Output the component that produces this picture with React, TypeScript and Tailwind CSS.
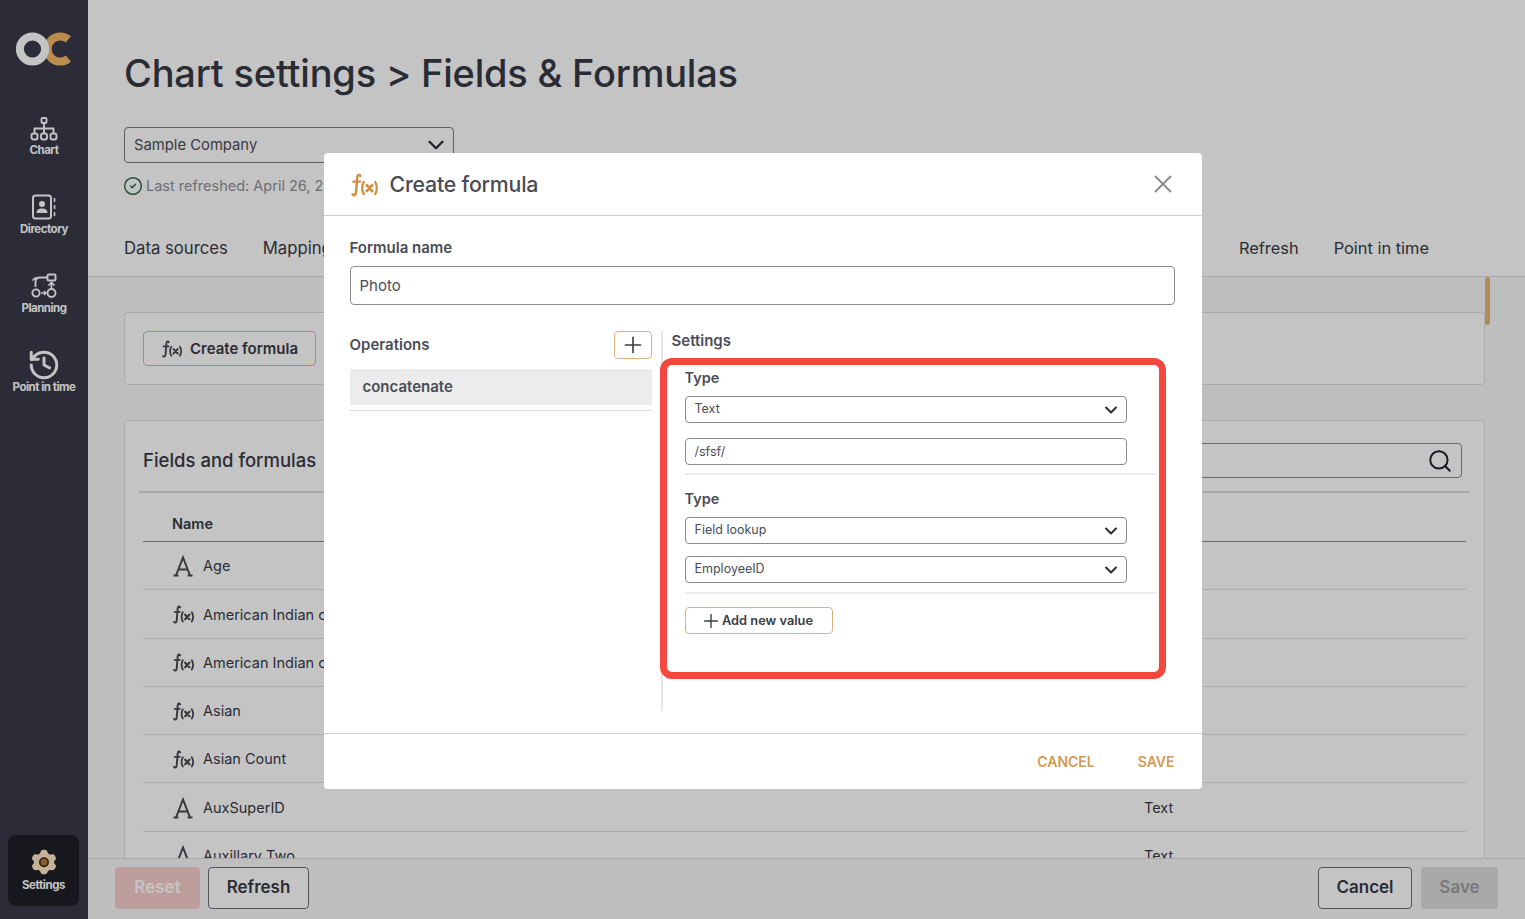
import React from "react";
import { ChevronDown, Plus, X, Search, History, CircleCheck } from "lucide-react";

const Fx = ({ className = "" }: { className?: string }) => (
  <svg viewBox="0 0 28 24" fill="none" stroke="currentColor" className={className}>
    <path d="M10.4 3C9.5 1.2 7.6 1.5 7.3 4L6 19.5C5.7 22 4.2 22.8 2.6 21.5" strokeWidth="2.5" strokeLinecap="round" />
    <path d="M3.4 8.6H10" strokeWidth="2.4" strokeLinecap="round" />
    <path d="M13.8 9C11.6 12.2 11.6 17.8 13.8 21M25.2 9C27.4 12.2 27.4 17.8 25.2 21" strokeWidth="2.3" strokeLinecap="round" />
    <path d="M16.8 12.2L22.2 18M22.2 12.2L16.8 18" strokeWidth="2.8" strokeLinecap="round" />
  </svg>
);

const AIcon = () => (
  <svg viewBox="0 0 20 22" fill="none" stroke="#4a4b52" strokeWidth="2" className="w-[20px] h-[22px] shrink-0">
    <path d="M3 20.5L10 2.5L17 20.5M5.2 14.5H14.8" />
    <path d="M0.5 20.6H5.4M14.6 20.6H19.5" />
  </svg>
);

const ChartIcon = () => (
  <svg viewBox="0 0 28 24" fill="none" stroke="currentColor" strokeWidth="1.9" className="w-[28px] h-[24px]">
    <rect x="11.5" y="1" width="5" height="5" rx="1" />
    <rect x="1.5" y="16.5" width="6" height="6" rx="2" />
    <rect x="11" y="16.5" width="6" height="6" rx="2" />
    <rect x="20.5" y="16.5" width="6" height="6" rx="2" />
    <path d="M14 6V16.5M4.5 16.5V11.5H23.5V16.5" />
  </svg>
);

const DirectoryIcon = () => (
  <svg viewBox="0 0 26 26" fill="none" stroke="currentColor" strokeWidth="2" className="w-[26px] h-[26px]">
    <rect x="2" y="1.5" width="18" height="23" rx="2.5" />
    <circle cx="11" cy="10" r="3" fill="currentColor" stroke="none" />
    <path d="M5.5 19C5.5 15.5 8 14.5 11 14.5S16.5 15.5 16.5 19Z" fill="currentColor" stroke="none" />
    <path d="M23.5 4V8M23.5 11V15M23.5 18V22" strokeWidth="1.6" />
  </svg>
);

const PlanningIcon = () => (
  <svg viewBox="0 0 28 26" fill="none" stroke="currentColor" strokeWidth="1.9" className="w-[28px] h-[26px]">
    <rect x="17.5" y="1.5" width="8" height="6" rx="1" />
    <circle cx="6" cy="20" r="3.6" />
    <circle cx="21.5" cy="20" r="4" />
    <path d="M17 4.5H10C7 4.5 5.5 6.5 5.5 9V14" />
    <path d="M2.5 7.5L5.8 4.3" strokeWidth="1.7" />
    <path d="M21.5 15.5V9.5M18.5 12.5L21.5 9.5L24.5 12.5" strokeWidth="1.7" />
    <path d="M11 20H16M14 18L16 20L14 22" strokeWidth="1.5" />
  </svg>
);

const GearIcon = () => (
  <svg viewBox="0 0 26 26" className="w-[26px] h-[26px]">
    <path
      fill="#ffe6c4"
      d="M10.2 1.6C11 .6 15 .6 15.8 1.6L17 4.2C17.5 4.9 18.6 5.5 19.4 5.4L22.2 5.2C23.5 5.3 25.4 8.7 24.9 9.9L23.3 12.2C22.9 12.8 22.9 13.7 23.3 14.3L24.9 16.6C25.4 17.8 23.5 21 22.2 21.2L19.4 21C18.6 21 17.5 21.5 17 22.2L15.8 24.6C15 25.7 11 25.7 10.2 24.6L9 22.2C8.5 21.5 7.4 21 6.6 21L3.8 21.2C2.5 21 .6 17.8 1.1 16.6L2.7 14.3C3.1 13.7 3.1 12.8 2.7 12.2L1.1 9.9C.6 8.7 2.5 5.3 3.8 5.2L6.6 5.4C7.4 5.5 8.5 4.9 9 4.2Z"
    />
    <circle cx="13" cy="13.2" r="4.2" fill="#b47a34" stroke="#33231a" strokeWidth="1.6" />
  </svg>
);

const Logo = () => (
  <svg viewBox="0 0 56 34" fill="none" className="w-[56px] h-[34px] -translate-x-[1px]">
    <path d="M53.4 7.4A12.6 12.6 0 1 0 53.4 26.6" stroke="#f5b665" strokeWidth="8" />
    <circle cx="17.5" cy="17" r="12.6" stroke="#ffffff" strokeWidth="8" />
  </svg>
);

const NavItem = ({ icon, label }: { icon: React.ReactNode; label: string }) => (
  <div className="flex flex-col items-center h-[79px] text-white">
    <div className="h-[28px] flex items-end">{icon}</div>
    <span className="mt-[2px] text-[11.5px] leading-[14px] font-bold tracking-[-0.5px]">{label}</span>
  </div>
);

const Row = ({ fx, name, type }: { fx?: boolean; name: string; type?: string }) => (
  <div className="flex items-center h-[48.3px] shrink-0 border-b border-[#dfdfe1] pl-[29px] pt-[1px] text-[14.5px] text-[#373a46]">
    <div className="w-[972px] flex items-center gap-[9px]">
      <div className="w-[22px] flex justify-center">
        {fx ? <Fx className="w-[22px] h-[19px] text-[#4a4b52]" /> : <AIcon />}
      </div>
      <span>{name}</span>
    </div>
    {type && <span>{type}</span>}
  </div>
);

const SelectBox = ({ value }: { value: string }) => (
  <div className="h-[27px] w-[442px] rounded-[4px] border border-[#8b8b90] flex items-center justify-between pl-[9px] pr-[5px] text-[12.5px] text-[#4b4d57]">
    <span>{value}</span>
    <ChevronDown className="w-[20px] h-[20px] text-[#2b2d38]" strokeWidth={2.4} />
  </div>
);

const TypeLabel = () => <div className="text-[14.5px] leading-[18px] font-semibold text-[#4b4d57]">Type</div>;

const Modal = () => (
  <div className="relative w-[878px] h-[636px] bg-white rounded-[4px] flex flex-col">
    <div className="h-[63px] shrink-0 border-b border-[#d0d0d2] flex items-center justify-between pl-[26px] pr-[24px]">
      <div className="flex items-center gap-[12px] pt-[1px]">
        <Fx className="w-[28px] h-[24px] text-[#d08f42]" />
        <span className="text-[21.3px] font-medium text-[#4a4c55] tracking-[-0.2px]">Create formula</span>
      </div>
      <X className="w-[30px] h-[30px] text-[#8c8c8c]" strokeWidth={1.5} />
    </div>

    <div className="flex-1 px-[26px] pt-[23px]">
      <div className="text-[15px] leading-[18px] font-semibold text-[#4b4d57]">Formula name</div>
      <input
        readOnly
        value="Photo"
        className="mt-[9px] w-[825px] h-[39px] rounded-[4px] border border-[#8b8b90] px-[9px] text-[15px] text-[#4b4d57] outline-none"
      />
      <div className="mt-[26px] flex">
        <div className="w-[302px]">
          <div className="flex items-center justify-between h-[28px]">
            <span className="pt-[1px] text-[15px] font-semibold text-[#4b4d57]">Operations</span>
            <div className="w-[38px] h-[28px] rounded-[4px] border border-[#d9b27f] flex items-center justify-center">
              <Plus className="w-[26px] h-[26px] text-[#3a3c47]" strokeWidth={1.5} />
            </div>
          </div>
          <div className="mt-[10px] h-[36px] bg-[#ececec] flex items-center pl-[13px] text-[15px] font-semibold text-[#4b4d57]">
            concatenate
          </div>
          <div className="mt-[5px] border-b border-[#dcdcdc]" />
        </div>
        <div className="ml-[9px] w-[2px] h-[380px] bg-[#e6e6e6]" />
        <div className="pl-[9px] flex-1">
          <div className="pt-[1px] text-[15px] leading-[18px] font-semibold text-[#4b4d57] mb-[19px]">Settings</div>
          <div className="pl-[13px] w-[485px]">
            <TypeLabel />
            <div className="mt-[9px]"><SelectBox value="Text" /></div>
            <input
              readOnly
              value="/sfsf/"
              className="mt-[15px] block w-[442px] h-[27px] rounded-[4px] border border-[#8b8b90] px-[9px] text-[12.5px] text-[#4b4d57] outline-none"
            />
            <div className="mt-[8px] border-b-2 border-[#ececec]" />
            <div className="mt-[15px]"><TypeLabel /></div>
            <div className="mt-[9px]"><SelectBox value="Field lookup" /></div>
            <div className="mt-[12px]"><SelectBox value="EmployeeID" /></div>
            <div className="mt-[9px] border-b-2 border-[#ececec]" />
            <div className="mt-[13px] w-[148px] h-[27px] rounded-[4px] border border-[#d9b27f] flex items-center justify-center text-[12.8px] font-semibold text-[#3a3c47]">
              <Plus className="w-[22px] h-[22px] -ml-[4px]" strokeWidth={1.5} />
              <span>Add new value</span>
            </div>
          </div>
        </div>
      </div>
    </div>

    <div className="h-[56px] shrink-0 border-t border-[#d0d0d2] flex items-center justify-end gap-[43px] pr-[27px] text-[14px] font-semibold text-[#d19a55]">
      <span>CANCEL</span>
      <span>SAVE</span>
    </div>

    <div className="absolute left-[336px] top-[205px] w-[506px] h-[321px] rounded-[12px] border-[7px] border-[#f4483e]" />
  </div>
);

export default function App() {
  return (
    <div className="relative w-[1525px] h-[919px] overflow-hidden flex bg-white font-['Inter','Liberation_Sans',sans-serif] text-[#373a46]">
      <aside className="w-[88px] shrink-0 bg-[#383a49] flex flex-col items-center">
        <div className="mt-[32px] mb-[47px]"><Logo /></div>
        <NavItem icon={<ChartIcon />} label="Chart" />
        <NavItem icon={<DirectoryIcon />} label="Directory" />
        <NavItem icon={<PlanningIcon />} label="Planning" />
        <NavItem icon={<History className="w-[34px] h-[34px] -mb-[4px]" strokeWidth={2.1} />} label="Point in time" />
        <div className="mt-auto mb-[13px] self-start ml-[8px] w-[71px] h-[71px] rounded-[8px] bg-[#1f2027] flex flex-col items-center justify-center text-white">
          <GearIcon />
          <span className="mt-[3px] text-[11.5px] leading-[14px] font-bold tracking-[-0.4px]">Settings</span>
        </div>
      </aside>

      <main className="flex-1 min-w-0 flex flex-col">
        <header className="h-[277px] shrink-0 border-b border-[#dcdcde] pl-[36px] pr-[96px] flex flex-col">
          <h1 className="mt-[49px] text-[38px] leading-[48px] font-medium tracking-[-0.2px]">
            Chart settings &gt; Fields &amp; Formulas
          </h1>
          <div className="mt-[30px] w-[330px] h-[36px] rounded-[4px] border border-[#7a7a80] flex items-center justify-between pl-[9px] pr-[4px] text-[14.8px] text-[#4b4d57]">
            <span className="pt-[1px]">Sample Company</span>
            <ChevronDown className="w-[26px] h-[26px] text-[#2b2d38]" strokeWidth={2.2} />
          </div>
          <div className="mt-[12px] flex items-center gap-[3px] text-[14.5px] text-[#8f9097]">
            <CircleCheck className="w-[20px] h-[20px] -ml-[1px] text-[#2f6a4a]" strokeWidth={1.8} />
            <span>Last refreshed: April 26, 2024</span>
          </div>
          <nav className="mt-[39px] flex justify-between text-[16.7px] leading-[24px]">
            <div className="flex gap-[35px]">
              <span>Data sources</span>
              <span>Mapping</span>
            </div>
            <div className="flex gap-[35px] text-[16.4px]">
              <span>Refresh</span>
              <span>Point in time</span>
            </div>
          </nav>
        </header>

        <div className="relative flex-1 min-h-0 overflow-hidden bg-[#f8f8f8] pt-[35px] pl-[36px] pr-[40px]">
          <div className="absolute right-[35px] top-0 w-[5px] h-[48px] rounded-[3px] bg-[#e9b67a]" />
          <section className="h-[73px] rounded-[4px] border border-[#e0e0e2] bg-white flex items-center pl-[18px]">
            <div className="w-[173px] h-[35px] rounded-[4px] border border-[#e9b67a] flex items-center justify-center gap-[8px] text-[15px] font-semibold">
              <Fx className="w-[21px] h-[18px] text-[#4a4b52]" />
              <span className="pt-[1px]">Create formula</span>
            </div>
          </section>
          <section className="mt-[35px] h-[520px] rounded-[4px] border border-[#e0e0e2] bg-white px-[14px]">
            <div className="h-[72px] flex items-center justify-between border-b-2 border-[#dcdcde] pl-[4px] pr-[8px] pt-[9px]">
              <span className="text-[18.5px] font-medium">Fields and formulas</span>
              <div className="w-[400px] h-[35px] rounded-[4px] border border-[#8b8b90] flex items-center justify-end pr-[8px]">
                <Search className="w-[26px] h-[26px] text-[#1f2027]" strokeWidth={1.8} />
              </div>
            </div>
            <div className="mx-[4px]">
              <div className="h-[49px] pt-[22px] pl-[29px] border-b border-[#8b8b90] text-[14.5px] leading-[18px] font-semibold flex">
                Name
              </div>
              <Row name="Age" />
              <Row fx name="American Indian or Alaska Native" />
              <Row fx name="American Indian or Alaska Count" />
              <Row fx name="Asian" />
              <Row fx name="Asian Count" />
              <Row name="AuxSuperID" type="Text" />
              <Row name="Auxillary Two" type="Text" />
            </div>
          </section>
        </div>

        <footer className="h-[61px] shrink-0 border-t border-[#dcdcde] bg-[#f8f8f8] flex items-start justify-between pt-[8px] pl-[27px] pr-[27px] text-[17px] font-semibold">
          <div className="flex gap-[8px]">
            <div className="w-[85px] h-[42px] rounded-[4px] bg-[#f8cdcd] text-white flex items-center justify-center">Reset</div>
            <div className="w-[101px] h-[42px] rounded-[4px] border border-[#6f7078] bg-white flex items-center justify-center">Refresh</div>
          </div>
          <div className="flex gap-[9px]">
            <div className="w-[94px] h-[42px] rounded-[4px] border border-[#6f7078] bg-white flex items-center justify-center">Cancel</div>
            <div className="w-[77px] h-[42px] rounded-[4px] bg-[#dcdcde] text-[#9c9da3] flex items-center justify-center">Save</div>
          </div>
        </footer>
      </main>

      <div className="absolute inset-0 bg-black/[0.23] flex justify-center items-start pt-[153px]">
        <Modal />
      </div>
    </div>
  );
}
